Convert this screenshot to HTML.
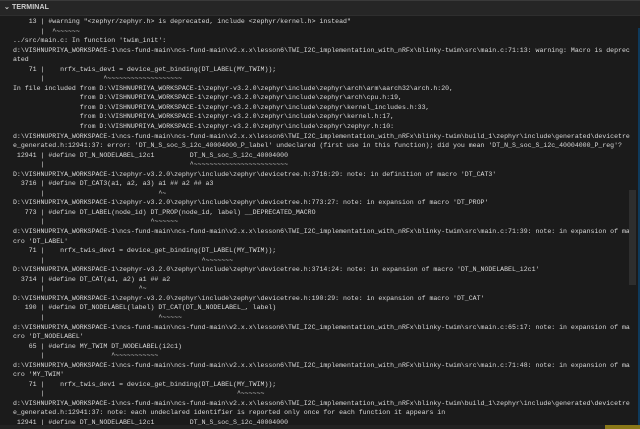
<!DOCTYPE html>
<html><head><meta charset="utf-8"><style>
html,body{margin:0;padding:0;width:640px;height:429px;overflow:hidden;background:#1b1b1b}
.hdr{position:absolute;left:0;top:0;width:640px;height:14px;background:#262626;border-top:1px solid #3a3a3a;border-bottom:1px solid #2e2e2e}
.hdr span{position:absolute;left:4px;top:2px;font:bold 7px "Liberation Sans",sans-serif;color:#cfcfcf;letter-spacing:0.1px}
pre{position:absolute;left:13px;top:17px;margin:0;font-family:"Liberation Mono",monospace;font-size:6.55px;line-height:9.55px;color:#dadada;white-space:pre;letter-spacing:0px}
.sb{position:absolute;left:629px;top:190px;width:7px;height:95px;background:#2e2e2e}
.blue{position:absolute;left:638px;top:28px;width:2px;height:401px;background:#0e3a5c}
.stat{position:absolute;left:0;top:425px;width:640px;height:4px;background:#222}
.gold{position:absolute;left:605px;top:425px;width:35px;height:4px;background:#8a7818}
</style></head><body>
<div class="hdr"><span>&#8964; TERMINAL</span></div>
<pre>    13 | #warning "&lt;zephyr/zephyr.h&gt; is deprecated, include &lt;zephyr/kernel.h&gt; instead"
       |  ^~~~~~~
../src/main.c: In function 'twim_init':
d:\VISHNUPRIYA_WORKSPACE-1\ncs-fund-main\ncs-fund-main\v2.x.x\lesson6\TWI_I2C_implementation_with_nRFx\blinky-twim\src\main.c:71:13: warning: Macro is deprec
ated
    71 |    nrfx_twis_dev1 = device_get_binding(DT_LABEL(MY_TWIM));
       |               ^~~~~~~~~~~~~~~~~~~~
In file included from D:\VISHNUPRIYA_WORKSPACE-1\zephyr-v3.2.0\zephyr\include\zephyr\arch\arm\aarch32\arch.h:20,
                 from D:\VISHNUPRIYA_WORKSPACE-1\zephyr-v3.2.0\zephyr\include\zephyr\arch\cpu.h:19,
                 from D:\VISHNUPRIYA_WORKSPACE-1\zephyr-v3.2.0\zephyr\include\zephyr\kernel_includes.h:33,
                 from D:\VISHNUPRIYA_WORKSPACE-1\zephyr-v3.2.0\zephyr\include\zephyr\kernel.h:17,
                 from D:\VISHNUPRIYA_WORKSPACE-1\zephyr-v3.2.0\zephyr\include\zephyr\zephyr.h:10:
d:\VISHNUPRIYA_WORKSPACE-1\ncs-fund-main\ncs-fund-main\v2.x.x\lesson6\TWI_I2C_implementation_with_nRFx\blinky-twim\build_1\zephyr\include\generated\devicetre
e_generated.h:12941:37: error: 'DT_N_S_soc_S_i2c_40004000_P_label' undeclared (first use in this function); did you mean 'DT_N_S_soc_S_i2c_40004000_P_reg'?
 12941 | #define DT_N_NODELABEL_i2c1         DT_N_S_soc_S_i2c_40004000
       |                                     ^~~~~~~~~~~~~~~~~~~~~~~~~
D:\VISHNUPRIYA_WORKSPACE-1\zephyr-v3.2.0\zephyr\include\zephyr\devicetree.h:3716:29: note: in definition of macro 'DT_CAT3'
  3716 | #define DT_CAT3(a1, a2, a3) a1 ## a2 ## a3
       |                             ^~
D:\VISHNUPRIYA_WORKSPACE-1\zephyr-v3.2.0\zephyr\include\zephyr\devicetree.h:773:27: note: in expansion of macro 'DT_PROP'
   773 | #define DT_LABEL(node_id) DT_PROP(node_id, label) __DEPRECATED_MACRO
       |                           ^~~~~~~
d:\VISHNUPRIYA_WORKSPACE-1\ncs-fund-main\ncs-fund-main\v2.x.x\lesson6\TWI_I2C_implementation_with_nRFx\blinky-twim\src\main.c:71:39: note: in expansion of ma
cro 'DT_LABEL'
    71 |    nrfx_twis_dev1 = device_get_binding(DT_LABEL(MY_TWIM));
       |                                        ^~~~~~~~
D:\VISHNUPRIYA_WORKSPACE-1\zephyr-v3.2.0\zephyr\include\zephyr\devicetree.h:3714:24: note: in expansion of macro 'DT_N_NODELABEL_i2c1'
  3714 | #define DT_CAT(a1, a2) a1 ## a2
       |                        ^~
D:\VISHNUPRIYA_WORKSPACE-1\zephyr-v3.2.0\zephyr\include\zephyr\devicetree.h:190:29: note: in expansion of macro 'DT_CAT'
   190 | #define DT_NODELABEL(label) DT_CAT(DT_N_NODELABEL_, label)
       |                             ^~~~~~
d:\VISHNUPRIYA_WORKSPACE-1\ncs-fund-main\ncs-fund-main\v2.x.x\lesson6\TWI_I2C_implementation_with_nRFx\blinky-twim\src\main.c:65:17: note: in expansion of ma
cro 'DT_NODELABEL'
    65 | #define MY_TWIM DT_NODELABEL(i2c1)
       |                 ^~~~~~~~~~~~
d:\VISHNUPRIYA_WORKSPACE-1\ncs-fund-main\ncs-fund-main\v2.x.x\lesson6\TWI_I2C_implementation_with_nRFx\blinky-twim\src\main.c:71:48: note: in expansion of ma
cro 'MY_TWIM'
    71 |    nrfx_twis_dev1 = device_get_binding(DT_LABEL(MY_TWIM));
       |                                                 ^~~~~~~
d:\VISHNUPRIYA_WORKSPACE-1\ncs-fund-main\ncs-fund-main\v2.x.x\lesson6\TWI_I2C_implementation_with_nRFx\blinky-twim\build_1\zephyr\include\generated\devicetre
e_generated.h:12941:37: note: each undeclared identifier is reported only once for each function it appears in
 12941 | #define DT_N_NODELABEL_i2c1         DT_N_S_soc_S_i2c_40004000</pre>
<div class="sb"></div>
<div class="blue"></div>
<div class="stat"></div>
<div class="gold"></div>
</body></html>
